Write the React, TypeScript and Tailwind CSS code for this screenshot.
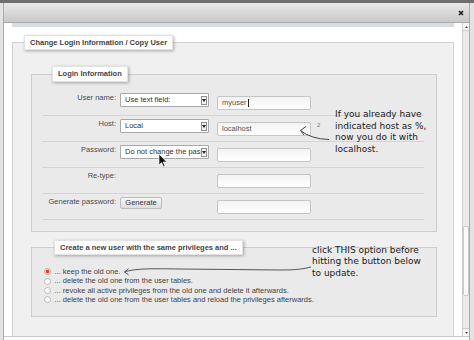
import React from "react";

const labelCls = "w-[74px] pt-[3px] text-right leading-[10px] text-[#4a4a4a]";

const Select = ({ value }: { value: string }) => (
  <div className="mt-[3px] ml-[4px] flex h-[14px] w-[89px] items-center rounded-[1px] border border-[#a9a9a9] bg-white pr-[1px]">
    <span className="flex-1 overflow-hidden whitespace-nowrap pl-[4px] leading-[12px] text-[#333]">
      {value}
    </span>
    <span className="flex h-[9px] w-[6px] items-center justify-center border border-[#8f8f8f] bg-[#f2f2f2]">
      <svg width="4" height="3" viewBox="0 0 4 3">
        <path d="M0 0 L4 0 L2 3 Z" fill="#222" />
      </svg>
    </span>
  </div>
);

const Input = ({ value, caret }: { value?: string; caret?: boolean }) => (
  <div className="mt-[6px] ml-[8px] flex h-[14px] w-[94px] items-center rounded-[2px] border border-[#c6c6c6] bg-gradient-to-b from-[#f3f3f3] to-white pl-[4px] text-[#555]">
    <span className="leading-[12px]">{value}</span>
    {caret && <span className="ml-[1px] h-[8px] w-px bg-[#222]" />}
  </div>
);

const Legend = ({ children, h }: { children: React.ReactNode; h: string }) => (
  <legend
    className={`ml-[10px] border border-[#e2e2e2] bg-white px-[5px] font-bold text-[#444] shadow-[1px_1px_3px_rgba(0,0,0,0.3)] ${h}`}
  >
    {children}
  </legend>
);

const Radio = ({ checked, text }: { checked?: boolean; text: string }) => (
  <div className="flex h-[9.4px] items-center">
    <span
      className={
        checked
          ? "h-[7px] w-[7px] shrink-0 rounded-full border border-[#d9a49c] bg-[radial-gradient(circle,#d8432f_38%,#f4c9c1_48%)]"
          : "h-[7px] w-[7px] shrink-0 rounded-full border border-[#b9b9b9] bg-white"
      }
    />
    <span className="ml-[3.5px] whitespace-nowrap text-[#444]">{text}</span>
  </div>
);

export default function App() {
  return (
    <div className="relative h-[340px] w-[474px] overflow-hidden bg-[#e3e3e3] font-['Liberation_Sans',Arial,sans-serif] text-[7.5px]">
      <div className="h-[3px] bg-[#6e6e6e]" />
      <div className="ml-[3px] flex h-[337px] w-[467px] flex-col border-x border-[#ababab] bg-white">
        {/* title bar */}
        <div className="flex h-[20px] shrink-0 items-center justify-end border-b border-[#a9a9a9] bg-gradient-to-b from-[#e8e8e8] to-[#c9c9c9] pr-[5px]">
          <svg width="6" height="6" viewBox="0 0 6 6">
            <path d="M1 1 L5 5 M5 1 L1 5" stroke="#222" strokeWidth="1.7" />
          </svg>
        </div>

        <div className="flex h-[313px] shrink-0">
          <div className="flex-1 overflow-hidden px-[8px]">
            <div className="h-[4px] bg-[#d6dde3]" />

            <fieldset className="mt-[8px] border border-[#d2d2d2] bg-[#f0f0f0] pb-[40px]">
              <legend className="ml-[11px] h-[15px] border border-[#e2e2e2] bg-white px-[5px] leading-[13px] font-bold text-[#444] shadow-[1px_1px_3px_rgba(0,0,0,0.3)]">
                Change Login Information / Copy User
              </legend>

              <fieldset className="mt-[16px] ml-[18px] w-[406px] border border-[#cdcdcd] bg-[#eaeaea] pr-[12px] pb-[11px] pl-[10px]">
                <Legend h="h-[16px] leading-[14px]">Login Information</Legend>
                <div className="pt-[8px]">
                  <div className="flex h-[26px] border-b border-[#d4d4d4]">
                    <span className={labelCls}>User name:</span>
                    <Select value="Use text field:" />
                    <Input value="myuser" caret />
                  </div>
                  <div className="flex h-[26px] border-b border-[#d4d4d4]">
                    <span className={labelCls}>Host:</span>
                    <Select value="Local" />
                    <Input value="localhost" />
                    <span className="mt-[5px] ml-[6px] text-[6px] text-[#777]">2</span>
                  </div>
                  <div className="flex h-[26px] border-b border-[#d4d4d4]">
                    <span className={labelCls}>Password:</span>
                    <Select value="Do not change the password" />
                    <Input />
                  </div>
                  <div className="flex h-[26px] border-b border-[#d4d4d4]">
                    <span className={labelCls}>Re-type:</span>
                    <div className="ml-[4px] w-[89px]" />
                    <Input />
                  </div>
                  <div className="flex h-[26px] border-b border-[#d4d4d4]">
                    <span className={labelCls}>Generate password:</span>
                    <div className="ml-[4px] w-[89px]">
                      <button className="mt-[3px] h-[12px] w-[42px] rounded-[2px] border border-[#bdbdbd] bg-gradient-to-b from-[#f7f7f7] to-[#dedede] leading-[10px] text-[#333]">
                        Generate
                      </button>
                    </div>
                    <Input />
                  </div>
                </div>
              </fieldset>

              <fieldset className="mt-[8px] ml-[18px] w-[406px] border border-[#cdcdcd] bg-[#eaeaea] pt-[12px] pb-[11px] pl-[12px]">
                <Legend h="h-[15px] leading-[13px] -ml-[2px]">
                  Create a new user with the same privileges and ...
                </Legend>
                <Radio checked text="... keep the old one." />
                <Radio text="... delete the old one from the user tables." />
                <Radio text="... revoke all active privileges from the old one and delete it afterwards." />
                <Radio text="... delete the old one from the user tables and reload the privileges afterwards." />
              </fieldset>
            </fieldset>
          </div>

          {/* scrollbar */}
          <div className="flex w-[7px] flex-col border-l border-[#cfcfcf] bg-[#ebebeb]">
            <div className="flex h-[8px] items-center justify-center border-b border-[#cfcfcf] bg-[#f6f6f6]">
              <svg width="3" height="2" viewBox="0 0 3 2">
                <path d="M0 2 L3 2 L1.5 0 Z" fill="#555" />
              </svg>
            </div>
            <div className="h-[195px]" />
            <div className="h-[70px] rounded-[2px] border border-[#c9c9c9] bg-[#fafafa]" />
            <div className="flex-1" />
            <div className="flex h-[8px] items-center justify-center border-t border-[#cfcfcf] bg-[#f6f6f6]">
              <svg width="3" height="2" viewBox="0 0 3 2">
                <path d="M0 0 L3 0 L1.5 2 Z" fill="#555" />
              </svg>
            </div>
          </div>
        </div>
        <div className="flex-1 border-t border-[#c8c8c8]" />
      </div>

      {/* annotations drawn over the screenshot */}
      <div className="absolute top-[109px] left-[335px] font-['DejaVu_Sans',sans-serif] text-[9px] leading-[11.6px] text-[#1a1a1a]">
        If you already have
        <br />
        indicated host as %,
        <br />
        now you do it with
        <br />
        localhost.
      </div>
      <div className="absolute top-[245px] left-[312px] font-['DejaVu_Sans',sans-serif] text-[9px] leading-[11.3px] text-[#1a1a1a]">
        click THIS option before
        <br />
        hitting the button below
        <br />
        to update.
      </div>
      <svg className="pointer-events-none absolute top-0 left-0" width="474" height="340">
        <path d="M300.5 130.5 Q311 139 329 139.5" fill="none" stroke="#333" strokeWidth="0.9" />
        <path d="M306 126.5 L300.5 130.5 L304 135" fill="none" stroke="#333" strokeWidth="0.9" />
        <path d="M124.5 272 C135 268.5 150 268.5 180 269 L280 270 C296 270 303 269 311 267" fill="none" stroke="#444" strokeWidth="0.9" />
        <path d="M128.5 268.8 L124.5 272 L128.5 274.8" fill="none" stroke="#444" strokeWidth="0.9" />
        <path d="M159 154 L159 165 L161.5 162.6 L163.4 166.6 L165 165.9 L163.1 162 L166.6 162 Z" fill="#111" stroke="#fff" strokeWidth="0.6" />
      </svg>
    </div>
  );
}
